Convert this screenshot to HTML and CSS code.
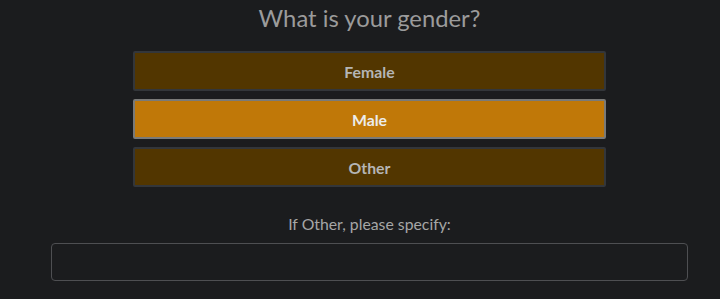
FILE: index.html
```html
<!DOCTYPE html>
<html>
<head>
<meta charset="utf-8">
<link rel="stylesheet" href="styles.css">
</head>
<body>
<div class="page">
  <h1 class="title">What is your gender?</h1>
  <div class="options">
    <button class="opt">Female</button>
    <button class="opt selected">Male</button>
    <button class="opt">Other</button>
  </div>
  <label class="label">If Other, please specify:</label>
  <input class="field" type="text">
</div>
</body>
</html>
```
FILE: styles.css
```css
html, body {
  margin: 0;
  padding: 0;
  background: #1b1c1e;
}
.page {
  width: 637px;
  margin-left: 51px;
  display: flex;
  flex-direction: column;
  align-items: center;
  font-family: Lato, "Liberation Sans", sans-serif;
}
.title {
  margin: 4px 0 0;
  height: 29px;
  font-size: 23.8px;
  font-weight: 400;
  line-height: 29px;
  color: #9b9b9b;
}
.options {
  margin-top: 18px;
  width: 473px;
  display: flex;
  flex-direction: column;
  gap: 8px;
}
.opt {
  height: 40px;
  margin: 0;
  padding: 1px 0 0;
  border: 2px solid #33363a;
  border-radius: 2px;
  background: #523600;
  color: #b5b5b5;
  font-family: Lato, "Liberation Sans", sans-serif;
  font-size: 15.8px;
  font-weight: 700;
}
.opt.selected {
  background: #c07808;
  border-color: #7a7a78;
  color: #ececec;
}
.label {
  margin-top: 27px;
  font-size: 15.8px;
  line-height: 20px;
  color: #a6a6a6;
}
.field {
  box-sizing: border-box;
  align-self: stretch;
  margin-top: 9px;
  height: 38px;
  background: #1b1c1e;
  border: 1px solid #4e4f52;
  border-radius: 4px;
}
```
